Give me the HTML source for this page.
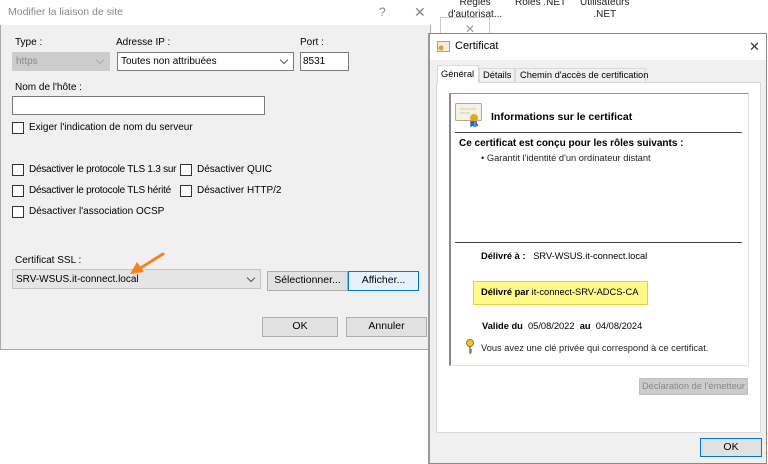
<!DOCTYPE html>
<html><head><meta charset="utf-8"><style>
*{box-sizing:border-box;margin:0;padding:0}
body{width:768px;height:463px;overflow:hidden;background:#fff;font-family:"Liberation Sans",sans-serif;font-size:10px;color:#000;position:relative}
.a{position:absolute;white-space:nowrap}
.cb{position:absolute;width:12px;height:12px;border:1px solid #333;background:#fff}
.btn{position:absolute;background:#e1e1e1;border:1px solid #adadad;text-align:center;line-height:17px;font-size:10.5px}
.chev{position:absolute;width:6px;height:6px;border-right:1px solid #555;border-bottom:1px solid #555;transform:rotate(45deg)}
b{font-weight:bold}
.c{font-size:9.3px}
.t{letter-spacing:-0.25px}
</style></head><body>
<div class="a" style="left:448px;top:-3px;color:#222;text-align:center;line-height:12px">Règles<br>d'autorisat...</div>
<div class="a" style="left:515px;top:-3px;color:#222">Rôles .NET</div>
<div class="a" style="left:580px;top:-3px;color:#222;text-align:center;line-height:12px">Utilisateurs<br>.NET</div>
<div class="a" style="left:440px;top:17px;width:50px;height:20px;border:1px solid #ccc;border-bottom:none"></div>
<div class="a" style="left:465px;top:22px;color:#999;font-size:12px">✕</div>

<div class="a" style="left:0;top:0;width:431px;height:350px;background:#f0f0f0;border:1px solid #aaa;border-top:none"></div>
<div class="a" style="left:0;top:0;width:431px;height:25px;background:#fff"></div>
<div class="a" style="left:8px;top:6px;color:#888;font-size:10.5px">Modifier la liaison de site</div>
<div class="a" style="left:379px;top:5px;color:#888;font-size:12px">?</div>
<div class="a" style="left:414px;top:4px;color:#888;font-size:14px">✕</div>

<div class="a" style="left:15px;top:37px">Type :</div>
<div class="a" style="left:116px;top:37px">Adresse IP :</div>
<div class="a" style="left:300px;top:37px">Port :</div>
<div class="a" style="left:12px;top:52px;width:98px;height:19px;background:#ccc;color:#888;padding:4px 4px">https</div>
<div class="chev" style="left:97px;top:57px;border-color:#aaa"></div>
<div class="a" style="left:117px;top:52px;width:177px;height:19px;background:#fff;border:1px solid #7a7a7a;padding:3px 3px">Toutes non attribuées</div>
<div class="chev" style="left:281px;top:57px"></div>
<div class="a" style="left:300px;top:52px;width:49px;height:19px;background:#fff;border:1px solid #7a7a7a;padding:3px 2px">8531</div>
<div class="a" style="left:15px;top:82px">Nom de l'hôte :</div>
<div class="a" style="left:12px;top:96px;width:253px;height:19px;background:#fff;border:1px solid #7a7a7a"></div>
<div class="cb" style="left:12px;top:122px"></div><div class="a" style="left:29px;top:122px">Exiger l'indication de nom du serveur</div>
<div class="cb" style="left:12px;top:164px"></div><div class="a t" style="left:29px;top:164px">Désactiver le protocole TLS 1.3 sur</div>
<div class="cb" style="left:180px;top:164px"></div><div class="a" style="left:197px;top:164px">Désactiver QUIC</div>
<div class="cb" style="left:12px;top:185px"></div><div class="a t" style="left:29px;top:185px">Désactiver le protocole TLS hérité</div>
<div class="cb" style="left:180px;top:185px"></div><div class="a" style="left:197px;top:185px">Désactiver HTTP/2</div>
<div class="cb" style="left:12px;top:206px"></div><div class="a" style="left:29px;top:206px">Désactiver l'association OCSP</div>
<div class="a" style="left:15px;top:255px">Certificat SSL :</div>
<div class="a" style="left:12px;top:269px;width:249px;height:20px;background:#e5e5e5;border:1px solid #c4c4c4;padding:4px 3px">SRV-WSUS.it-connect.local</div>
<div class="chev" style="left:248px;top:275px"></div>
<div class="btn" style="left:267px;top:271px;width:81px;height:20px">Sélectionner...</div>
<div class="btn" style="left:348px;top:271px;width:71px;height:20px;border:1px solid #0078d7;background:#e5f1fb">Afficher...</div>
<div class="btn" style="left:262px;top:317px;width:76px;height:20px">OK</div>
<div class="btn" style="left:346px;top:317px;width:81px;height:20px">Annuler</div>
<svg class="a" style="left:125px;top:250px" width="45" height="30"><path d="M38 4 L14 19" stroke="#f58220" stroke-width="3" stroke-linecap="round"/><path d="M5 24 L12 12 L19 22 Z" fill="#f58220"/></svg>

<div class="a" style="left:428px;top:33px;width:339px;height:431px;background:#f0f0f0;border:1px solid #888;border-left:2px solid #999"></div>
<div class="a" style="left:430px;top:34px;width:336px;height:26px;background:#fff"></div>
<svg class="a" style="left:437px;top:41px" width="13" height="11"><rect x="0.5" y="0.5" width="12" height="10" fill="#f6ecd8" stroke="#b89c6a"/><circle cx="4" cy="7" r="2.5" fill="#e0a020"/></svg>
<div class="a" style="left:455px;top:40px;font-size:11px">Certificat</div>
<div class="a" style="left:749px;top:39px;font-size:13px;color:#333">✕</div>
<div class="a" style="left:436px;top:82px;width:325px;height:351px;background:#fff;border:1px solid #d9d9d9"></div>
<div class="a c" style="left:437px;top:65px;width:42px;height:18px;background:#fff;border:1px solid #d9d9d9;border-bottom:none;padding:3px 3px">Général</div>
<div class="a c" style="left:479px;top:68px;width:36px;height:15px;background:#f0f0f0;border:1px solid #d9d9d9;padding:1px 3px">Détails</div>
<div class="a c" style="left:515px;top:68px;width:131px;height:15px;background:#f0f0f0;border:1px solid #d9d9d9;padding:1px 4px">Chemin d'accès de certification</div>
<div class="a" style="left:449px;top:93px;width:300px;height:273px;border:1px solid #e0e0e0;border-left:2px solid #888;border-top:1px solid #999"></div>
<svg class="a" style="left:455px;top:103px" width="28" height="24"><rect x="0.5" y="0.5" width="26" height="17" rx="1" fill="#f8f2e4" stroke="#b8a888"/><line x1="5" y1="6" x2="21" y2="6" stroke="#ccc"/><line x1="5" y1="10" x2="15" y2="10" stroke="#ccc"/><circle cx="19" cy="15" r="4" fill="#e8a818"/><path d="M16 18 l0 5 l2 -1 l1 1 l0 -5 M21 18 l0 5 l2 -1" fill="#2a6ad0" stroke="#2a6ad0" stroke-width="1.5"/></svg>
<div class="a" style="left:491px;top:111px;font-weight:bold;font-size:10.5px">Informations sur le certificat</div>
<div class="a" style="left:455px;top:132px;width:287px;height:1px;background:#444"></div>
<div class="a" style="left:459px;top:138px;font-weight:bold;font-size:10px">Ce certificat est conçu pour les rôles suivants :</div>
<div class="a c" style="left:481px;top:153px;color:#222">• Garantit l'identité d'un ordinateur distant</div>
<div class="a" style="left:455px;top:242px;width:287px;height:1px;background:#444"></div>
<div class="a c" style="left:481px;top:251px"><b>Délivré à :</b>&nbsp;&nbsp; SRV-WSUS.it-connect.local</div>
<div class="a" style="left:473px;top:281px;width:175px;height:24px;background:#fff98a;border:1px solid #f5cc30"></div>
<div class="a c" style="left:481px;top:287px"><b>Délivré par</b> it-connect-SRV-ADCS-CA</div>
<div class="a c" style="left:482px;top:321px"><b>Valide du</b>&nbsp; 05/08/2022&nbsp; <b>au</b>&nbsp; 04/08/2024</div>
<svg class="a" style="left:465px;top:339px" width="10" height="16"><circle cx="5" cy="4" r="3.5" fill="#f0c040" stroke="#a07820"/><path d="M5 7 v8 M5 11 h2 M5 13 h2" stroke="#a07820" stroke-width="1.5"/></svg>
<div class="a c" style="left:481px;top:343px;color:#222">Vous avez une clé privée qui correspond à ce certificat.</div>
<div class="a" style="left:639px;top:378px;width:109px;height:17px;background:#ccc;border:1px solid #bfbfbf;color:#888;font-size:9.3px;text-align:center;line-height:15px">Déclaration de l'émetteur</div>
<div class="btn" style="left:700px;top:438px;width:62px;height:19px;border:1px solid #0078d7;line-height:17px">OK</div>
</body></html>
